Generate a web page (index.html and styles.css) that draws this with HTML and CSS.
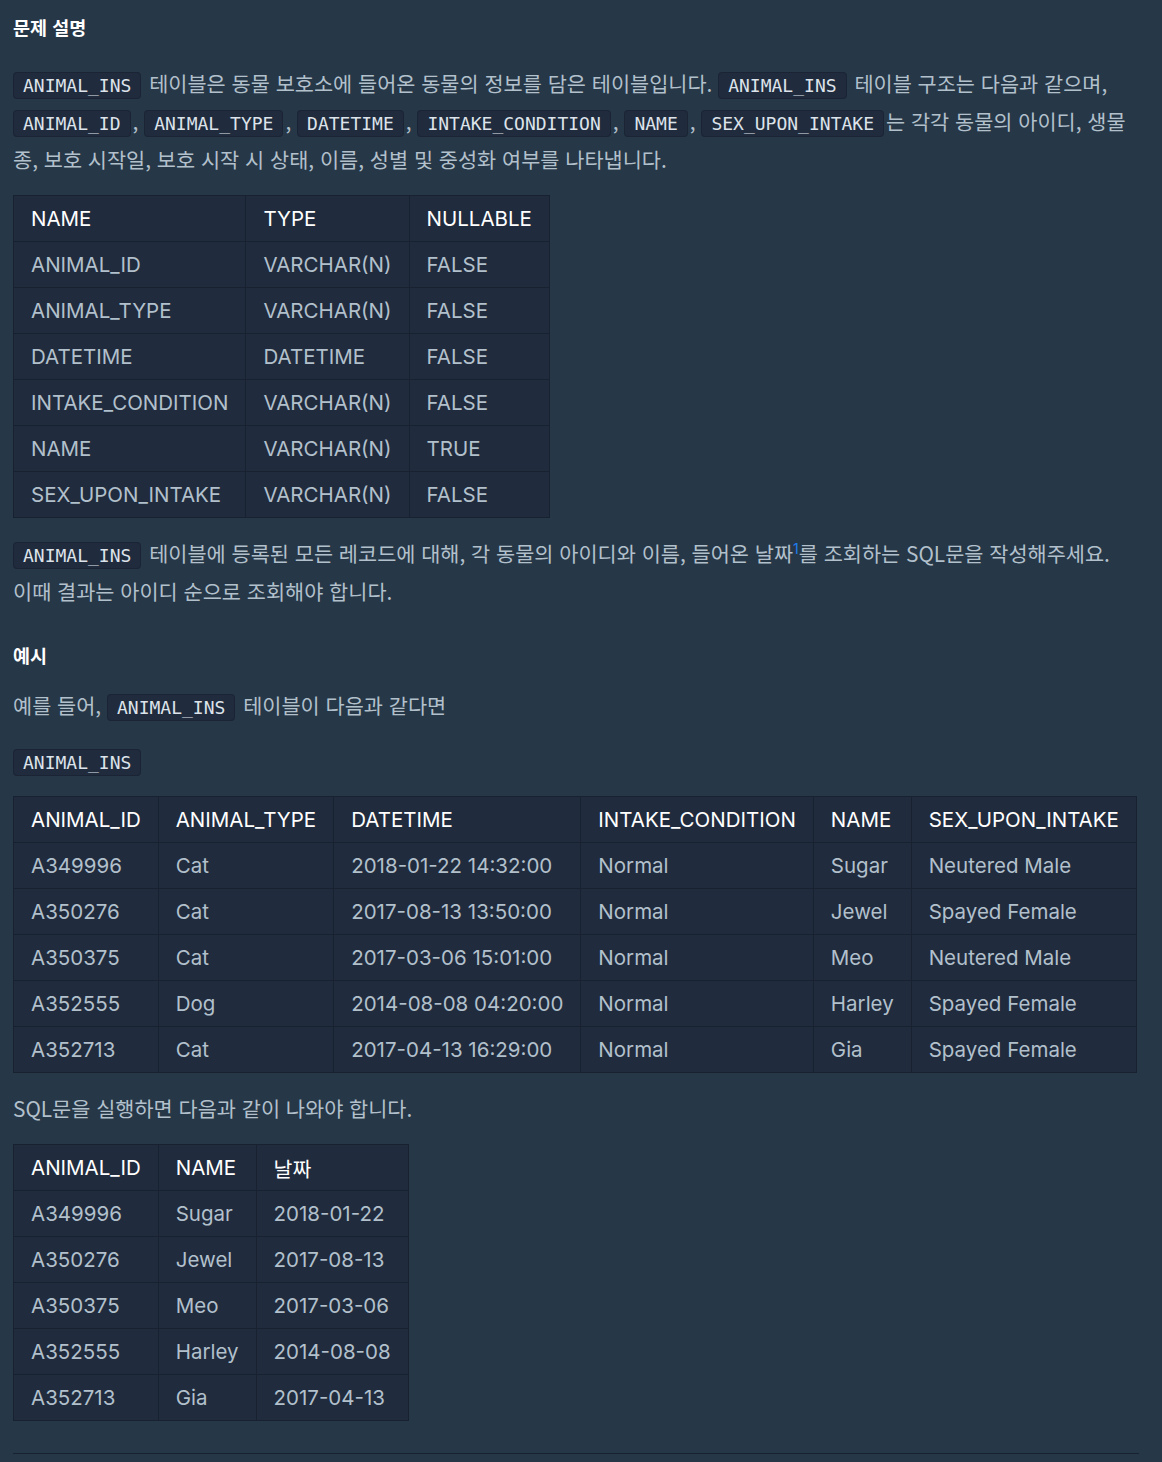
FILE: index.html
```html
<!DOCTYPE html>
<html lang="ko">
<head>
<meta charset="utf-8">
<link rel="stylesheet" href="styles.css">
</head>
<body>
<div class="guide">
  <h5 class="heading">문제 설명</h5>
  <p class="para"><code class="code">ANIMAL_INS</code> 테이블은 동물 보호소에 들어온 동물의 정보를 담은 테이블입니다. <code class="code">ANIMAL_INS</code> 테이블 구조는 다음과 같으며, <code class="code">ANIMAL_ID</code>, <code class="code">ANIMAL_TYPE</code>, <code class="code">DATETIME</code>, <code class="code">INTAKE_CONDITION</code>, <code class="code">NAME</code>, <code class="code">SEX_UPON_INTAKE</code>는 각각 동물의 아이디, 생물 종, 보호 시작일, 보호 시작 시 상태, 이름, 성별 및 중성화 여부를 나타냅니다.</p>
  <table class="tbl">
    <thead><tr><th>NAME</th><th>TYPE</th><th>NULLABLE</th></tr></thead>
    <tbody>
      <tr><td>ANIMAL_ID</td><td>VARCHAR(N)</td><td>FALSE</td></tr>
      <tr><td>ANIMAL_TYPE</td><td>VARCHAR(N)</td><td>FALSE</td></tr>
      <tr><td>DATETIME</td><td>DATETIME</td><td>FALSE</td></tr>
      <tr><td>INTAKE_CONDITION</td><td>VARCHAR(N)</td><td>FALSE</td></tr>
      <tr><td>NAME</td><td>VARCHAR(N)</td><td>TRUE</td></tr>
      <tr><td>SEX_UPON_INTAKE</td><td>VARCHAR(N)</td><td>FALSE</td></tr>
    </tbody>
  </table>
  <p class="para"><code class="code">ANIMAL_INS</code> 테이블에 등록된 모든 레코드에 대해, 각 동물의 아이디와 이름, 들어온 날짜<sup class="fn">1</sup>를 조회하는 SQL문을 작성해주세요. 이때 결과는 아이디 순으로 조회해야 합니다.</p>
  <h5 class="heading heading-sub">예시</h5>
  <p class="para">예를 들어, <code class="code">ANIMAL_INS</code> 테이블이 다음과 같다면</p>
  <p class="para"><code class="code code-solo">ANIMAL_INS</code></p>
  <table class="tbl">
    <thead><tr><th>ANIMAL_ID</th><th>ANIMAL_TYPE</th><th>DATETIME</th><th>INTAKE_CONDITION</th><th>NAME</th><th>SEX_UPON_INTAKE</th></tr></thead>
    <tbody>
      <tr><td>A349996</td><td>Cat</td><td>2018-01-22 14:32:00</td><td>Normal</td><td>Sugar</td><td>Neutered Male</td></tr>
      <tr><td>A350276</td><td>Cat</td><td>2017-08-13 13:50:00</td><td>Normal</td><td>Jewel</td><td>Spayed Female</td></tr>
      <tr><td>A350375</td><td>Cat</td><td>2017-03-06 15:01:00</td><td>Normal</td><td>Meo</td><td>Neutered Male</td></tr>
      <tr><td>A352555</td><td>Dog</td><td>2014-08-08 04:20:00</td><td>Normal</td><td>Harley</td><td>Spayed Female</td></tr>
      <tr><td>A352713</td><td>Cat</td><td>2017-04-13 16:29:00</td><td>Normal</td><td>Gia</td><td>Spayed Female</td></tr>
    </tbody>
  </table>
  <p class="para">SQL문을 실행하면 다음과 같이 나와야 합니다.</p>
  <table class="tbl tbl-last">
    <thead><tr><th>ANIMAL_ID</th><th>NAME</th><th>날짜</th></tr></thead>
    <tbody>
      <tr><td>A349996</td><td>Sugar</td><td>2018-01-22</td></tr>
      <tr><td>A350276</td><td>Jewel</td><td>2017-08-13</td></tr>
      <tr><td>A350375</td><td>Meo</td><td>2017-03-06</td></tr>
      <tr><td>A352555</td><td>Harley</td><td>2014-08-08</td></tr>
      <tr><td>A352713</td><td>Gia</td><td>2017-04-13</td></tr>
    </tbody>
  </table>
  <hr class="rule">
</div>
</body>
</html>
```

FILE: styles.css
```css
html, body {
  margin: 0;
  padding: 0;
  background: #263747;
}
body {
  font-family: Inter, "Noto Sans CJK KR", sans-serif;
  color: #b2c0cc;
  font-size: 18px;
}
.guide {
  padding: 15px 23px 0 13px;
}
.heading {
  margin: 0 0 25px 0;
  font-size: 18.5px;
  line-height: 24px;
  font-weight: 700;
  color: #ffffff;
  font-family: "Noto Sans CJK KR", sans-serif;
}
.heading-sub {
  margin-top: 33px;
  margin-bottom: 19px;
}
.para {
  margin: 0 0 17px 0;
  line-height: 38px;
  font-family: "Noto Sans CJK KR", sans-serif;
  font-size: 20.8px;
  word-break: keep-all;
}
.code {
  font-family: "DejaVu Sans Mono", monospace;
  font-size: 18px;
  line-height: 20px;
  background: #202b3d;
  border: 1px solid #1a2434;
  border-radius: 4px;
  padding: 2px 9px;
  margin: 0 2px 0 0;
  color: #dde3ea;
}
.fn {
  color: #1f7cf0;
  font-size: 14px;
  font-family: Inter, sans-serif;
  line-height: 0;
  vertical-align: 8px;
}
.tbl {
  border-collapse: collapse;
  background: #202b3d;
  border: 1px solid #172130;
  margin: 0 0 16px 0;
  font-family: Inter, "Noto Sans CJK KR", sans-serif;
  font-size: 20.5px;
}
.tbl th, .tbl td {
  border: 1px solid #172130;
  padding: 0 17px;
  height: 45px;
  text-align: left;
  white-space: nowrap;
}
.tbl th {
  color: #ffffff;
  font-weight: 400;
}
.tbl td {
  color: #b2c0cc;
}
.tbl-last {
  margin-bottom: 32px;
}
.rule {
  border: none;
  border-top: 1px solid #172130;
  margin: 0;
}
```
